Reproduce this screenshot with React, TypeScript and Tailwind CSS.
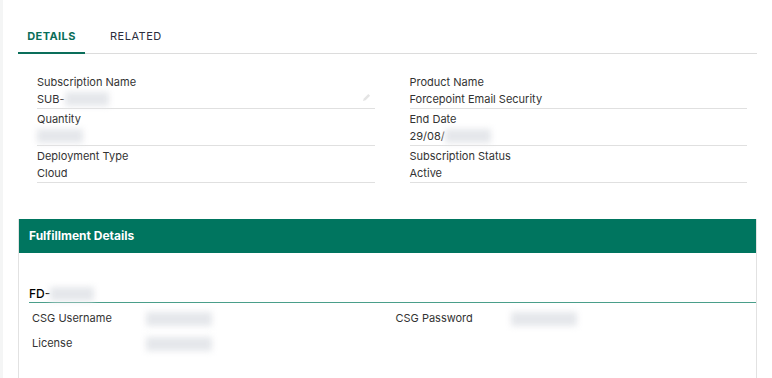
import React from "react";

const fields = [
  { label: "Subscription Name", value: "SUB-", blur: 44, edit: true },
  { label: "Product Name", value: "Forcepoint Email Security" },
  { label: "Quantity", value: "", blur: 46 },
  { label: "End Date", value: "29/08/", blur: 46 },
  { label: "Deployment Type", value: "Cloud" },
  { label: "Subscription Status", value: "Active" },
];

function Blurred({ w }: { w: number }) {
  return (
    <span
      className="inline-block h-[14px] bg-gray-200 blur-[3px] align-middle"
      style={{ width: w }}
    />
  );
}

export default function App() {
  return (
    <div className="flex min-h-[378px] w-[772px] bg-white font-['Inter',sans-serif] text-[11px] text-[#333]">
      <div className="w-[3px] shrink-0 bg-[#f4f5f5]" />
      <div className="ml-[15px] w-[739px] pt-[28px]">
        {/* tabs */}
        <div className="flex border-b border-[#dcdcdc]">
          <div className="-mb-px w-[67px] border-b-2 border-[#0a6e5a] pb-[7px] text-center text-[11px] font-bold tracking-[0.4px] text-[#0a6e5a]">
            DETAILS
          </div>
          <div className="ml-[25px] pb-[7px] text-[11px] font-normal tracking-[0.5px] text-[#2b2d3c]">
            RELATED
          </div>
        </div>

        {/* fields */}
        <div className="ml-[19px] mt-[18px] grid w-[710px] grid-cols-2 gap-x-[35px]">
          {fields.map((f) => (
            <div key={f.label} className="relative border-b border-[#e0e0e0] pt-[2px]">
              <div className="leading-[16px]">{f.label}</div>
              <div className="flex h-[18px] items-center pt-[1px]">
                <span>{f.value}</span>
                {f.blur && <Blurred w={f.blur} />}
              </div>
              {f.edit && (
                <svg
                  className="absolute right-[4px] top-[21px]"
                  width="9"
                  height="9"
                  viewBox="0 0 10 10"
                >
                  <path d="M1 9 L2 6 L7 1 L9 3 L4 8 Z" fill="#e4e4e4" />
                </svg>
              )}
            </div>
          ))}
        </div>

        {/* fulfillment */}
        <div className="mt-[36px] h-[160px] border-x border-[#e2e2e2]">
          <div className="flex h-[34px] items-center bg-[#00755f] px-[10px] text-[12px] font-bold text-white">
            Fulfillment Details
          </div>
          <div className="pl-[10px] pt-[35px]">
            <div className="flex h-[15px] items-center border-b border-[#4a9e8a] pb-[2px] text-[12px] font-medium text-black">
              <span>FD-</span>
              <Blurred w={44} />
            </div>
            <div className="grid grid-cols-2 pt-[8px]">
              <div className="flex h-[16px] items-center pl-[3px]">
                <span className="w-[114px]">CSG Username</span>
                <Blurred w={66} />
              </div>
              <div className="flex h-[16px] items-center pl-[3px]">
                <span className="w-[115px]">CSG Password</span>
                <Blurred w={66} />
              </div>
              <div className="mt-[9px] flex h-[16px] items-center pl-[3px]">
                <span className="w-[114px]">License</span>
                <Blurred w={66} />
              </div>
            </div>
          </div>
        </div>
      </div>
    </div>
  );
}
